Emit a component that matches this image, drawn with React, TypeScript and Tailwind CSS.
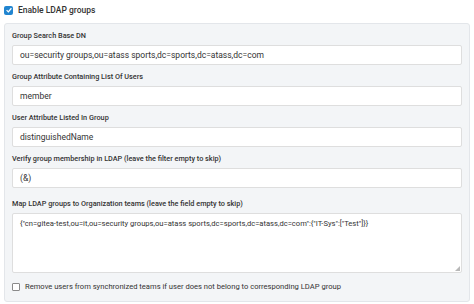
import React from "react";

function Field({ label, value, className }: { label: string; value: string; className?: string }) {
  return (
    <div className={className}>
      <label className="block text-[7.3px] font-medium leading-[10px] text-[#333]">{label}</label>
      <div className="mt-[4px] flex h-[20px] items-center rounded-[2px] border border-[#dedede] bg-white px-[7px] text-[8.5px] text-[#333]">
        {value}
      </div>
    </div>
  );
}

export default function App() {
  return (
    <div className="h-[304px] w-[474px] bg-white px-[4px] pt-[5px] font-['Roboto',sans-serif]">
      <div className="flex items-center gap-[5px]">
        <span className="flex h-[9px] w-[9px] items-center justify-center rounded-[2px] bg-[#2185d0]">
          <svg viewBox="0 0 10 10" className="h-[8px] w-[8px]">
            <path d="M2 5.2 L4.2 7.3 L8 2.8" fill="none" stroke="white" strokeWidth="1.6" />
          </svg>
        </span>
        <span className="text-[8.5px] font-medium leading-[10px] text-[#333]">Enable LDAP groups</span>
      </div>
      <div className="mt-[8px] w-[466px] rounded-[3px] border border-[#e3e6ea] bg-[#f3f5f7] px-[7px] pt-[7px] pb-[9px]">
        <Field label="Group Search Base DN" value="ou=security groups,ou=atass sports,dc=sports,dc=atass,dc=com" />
        <Field className="mt-[7px]" label="Group Attribute Containing List Of Users" value="member" />
        <Field className="mt-[7px]" label="User Attribute Listed In Group" value="distinguishedName" />
        <Field className="mt-[7px]" label="Verify group membership in LDAP (leave the filter empty to skip)" value="(&)" />
        <div className="mt-[11px]">
          <label className="block text-[7.3px] font-medium leading-[10px] text-[#333]">
            Map LDAP groups to Organization teams (leave the field empty to skip)
          </label>
          <div className="relative mt-[4px] h-[60px] rounded-[2px] border border-[#dedede] bg-white px-[7px] py-[4px] text-[7.6px] leading-[12px] text-[#333]">
            {'{"cn=gitea-test,ou=it,ou=security groups,ou=atass sports,dc=sports,dc=atass,dc=com":{"IT-Sys":["Test"]}}'}
            <svg viewBox="0 0 6 6" className="absolute right-[1px] bottom-[1px] h-[5px] w-[5px]">
              <path d="M6 0 L6 6 L0 6 Z" fill="#b8b8b8" />
            </svg>
          </div>
        </div>
        <div className="mt-[9px] flex items-center gap-[5px]">
          <span className="h-[8px] w-[8px] rounded-[1px] border border-[#8a8a8a] bg-white" />
          <span className="text-[7.6px] leading-[10px] text-[#333]">
            Remove users from synchronized teams if user does not belong to corresponding LDAP group
          </span>
        </div>
      </div>
    </div>
  );
}
